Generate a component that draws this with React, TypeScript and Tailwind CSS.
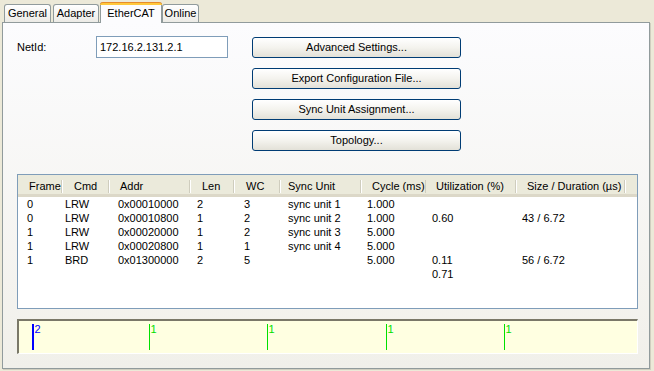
import React from "react";

const font = { fontFamily: '"Liberation Sans", Arial, sans-serif' };

type Col = { h: string; w: number; hp: number; rp: number };
const cols: Col[] = [
  { h: "Frame", w: 45, hp: 11, rp: 9 },
  { h: "Cmd", w: 47, hp: 11, rp: 2 },
  { h: "Addr", w: 81, hp: 10, rp: 8 },
  { h: "Len", w: 44, hp: 11, rp: 6 },
  { h: "WC", w: 46, hp: 11, rp: 9 },
  { h: "Sync Unit", w: 81, hp: 7, rp: 7 },
  { h: "Cycle (ms)", w: 64, hp: 10, rp: 5 },
  { h: "Utilization (%)", w: 91, hp: 10, rp: 6 },
  { h: "Size / Duration (µs)", w: 109, hp: 10, rp: 5 },
];

const rows: string[][] = [
  ["0", "LRW", "0x00010000", "2", "3", "sync unit 1", "1.000", "", ""],
  ["0", "LRW", "0x00010800", "1", "2", "sync unit 2", "1.000", "0.60", "43 / 6.72"],
  ["1", "LRW", "0x00020000", "1", "2", "sync unit 3", "5.000", "", ""],
  ["1", "LRW", "0x00020800", "1", "1", "sync unit 4", "5.000", "", ""],
  ["1", "BRD", "0x01300000", "2", "5", "", "5.000", "0.11", "56 / 6.72"],
  ["", "", "", "", "", "", "", "0.71", ""],
];

function Tab({ label, w, ml, selected }: { label: string; w: number; ml: number; selected?: boolean }) {
  if (selected) {
    return (
      <div
        className="relative z-10 mb-[-1px] h-[21px] rounded-t-[3px] border-x border-[#919B9C] bg-[#FCFCFE] text-center"
        style={{ width: w, marginLeft: ml }}
      >
        <div className="h-[3px] rounded-t-[3px] bg-[#FFC83C] border-t border-[#E68B2C] mx-[-1px]" />
        <div className="pt-[2px] leading-[13px]">{label}</div>
      </div>
    );
  }
  return (
    <div
      className="h-[18px] rounded-t-[3px] border-x border-t border-[#919B9C] bg-linear-to-b from-white to-[#ECEBE6] text-center leading-[13px] pt-[2px]"
      style={{ width: w, marginLeft: ml }}
    >
      {label}
    </div>
  );
}

function XPButton({ label }: { label: string }) {
  return (
    <div className="flex h-[21px] w-[209px] items-center justify-center rounded-[3px] border border-[#003C74] bg-linear-to-b from-white via-[#F4F3EE] to-[#E3E1D8] leading-none">
      {label}
    </div>
  );
}

export default function App() {
  const markers = [
    { x: 13, t: "2", c: "#0000FF", w: 2 },
    { x: 130, t: "1", c: "#00E000", w: 1 },
    { x: 248, t: "1", c: "#00E000", w: 1 },
    { x: 367, t: "1", c: "#00E000", w: 1 },
    { x: 485, t: "1", c: "#00E000", w: 1 },
  ];
  return (
    <div className="h-[371px] w-[654px] overflow-hidden bg-[#ECE9D8] text-[11px] text-black" style={font}>
      <div className="flex h-[22px] items-end pl-[4px]">
        <Tab label="General" w={47} ml={0} />
        <Tab label="Adapter" w={46} ml={2} />
        <Tab label="EtherCAT" w={62} ml={1} selected />
        <Tab label="Online" w={37} ml={0} />
      </div>
      <div className="ml-[2px] h-[347px] w-[648px] border border-[#919B9C] bg-linear-to-b from-[#FCFCFE] to-[#F1F0EA] pl-[14px] pt-[13px] shadow-[1px_1px_0_#D0CEBF]">
        <div className="flex items-start">
          <div className="flex items-center">
            <div className="w-[79px]">NetId:</div>
            <div className="flex h-[22px] w-[132px] items-center border border-[#7F9DB9] bg-white pl-[3px]">172.16.2.131.2.1</div>
          </div>
          <div className="ml-[24px] mt-[1px] flex flex-col gap-[10px]">
            <XPButton label="Advanced Settings..." />
            <XPButton label="Export Configuration File..." />
            <XPButton label="Sync Unit Assignment..." />
            <XPButton label="Topology..." />
          </div>
        </div>

        <div className="mt-[23px] h-[135px] w-[621px] overflow-hidden border border-[#7F9DB9] bg-white">
          <div className="flex h-[22px] border-b-[3px] border-[#DCD8C8] bg-[#EBEADB] pt-[4px]">
            {cols.map((c) => (
              <div key={c.h} className="flex items-center" style={{ width: c.w }}>
                <div className="flex-1 whitespace-nowrap" style={{ paddingLeft: c.hp }}>
                  {c.h}
                </div>
                <div className="h-[13px] w-[2px] border-l border-[#CFCDBE] bg-white" />
              </div>
            ))}
          </div>
          {rows.map((r, i) => (
            <div key={i} className="flex h-[14px] leading-[14px]">
              {r.map((v, j) => (
                <div key={j} className="whitespace-nowrap" style={{ width: cols[j].w, paddingLeft: cols[j].rp }}>
                  {v}
                </div>
              ))}
            </div>
          ))}
        </div>

        <div className="mt-[10px] h-[35px] w-[621px] border-l-2 border-t-2 border-r border-b border-l-[#7A7868] border-t-[#7A7868] border-r-white border-b-white bg-[#FFFFE1]">
          <svg width="618" height="32" className="block">
            {markers.map((m, i) => (
              <g key={i}>
                <rect x={m.x} y={3} width={m.w} height={26} fill={m.c} />
                <text x={m.x + m.w + 0.5} y={12} fontSize={11} fill={m.c} fontFamily='"Liberation Sans", Arial, sans-serif'>
                  {m.t}
                </text>
              </g>
            ))}
          </svg>
        </div>
      </div>
    </div>
  );
}
